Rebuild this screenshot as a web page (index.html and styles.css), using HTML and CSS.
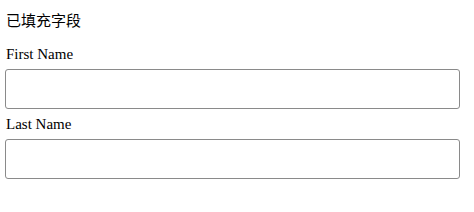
FILE: index.html
```html
<!DOCTYPE html>
<html>
<head>
<meta charset="utf-8">
<link rel="stylesheet" href="styles.css">
</head>
<body>
<div class="form">
  <div class="title">已填充字段</div>
  <label class="label">First Name</label>
  <input class="field" type="text">
  <label class="label">Last Name</label>
  <input class="field" type="text">
</div>
</body>
</html>
```

FILE: styles.css
```css
html, body {
  margin: 0;
  padding: 0;
  background: #fff;
}
.form {
  display: flex;
  flex-direction: column;
  padding: 10px 14px 0 5px;
  font-family: "Liberation Serif", serif;
  color: #000;
}
.title {
  font-family: "Noto Sans CJK SC", sans-serif;
  font-size: 15px;
  line-height: 20px;
  margin: 0 0 0 1px;
}
.label {
  font-size: 15px;
  line-height: 19px;
  margin-top: 15px;
  margin-bottom: 5px;
  padding-left: 1px;
}
.field + .label {
  margin-top: 6px;
}
.field {
  box-sizing: border-box;
  height: 40px;
  width: 100%;
  margin: 0;
  border: 1px solid #8a8a8a;
  border-radius: 3px;
  background: #fff;
  font-size: 15px;
}
```
